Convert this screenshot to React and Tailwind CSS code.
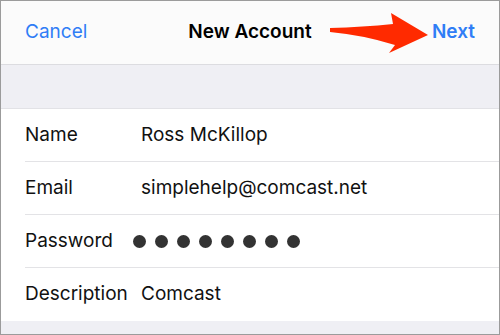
import React from 'react';

const rows = [
    { label: 'Name', value: 'Ross McKillop' },
    { label: 'Email', value: 'simplehelp@comcast.net' },
    { label: 'Password', dots: 8 },
    { label: 'Description', value: 'Comcast' },
];

const Arrow = () => (
    <svg className="absolute left-[326px] top-[8px]" width="106" height="50" viewBox="0 0 106 50">
        <path
            d="M3 19 Q36 18 66 15 L64 4 L101 26 L62 44 L68 36 Q36 26 3 23 Z"
            fill="#ff2a00"
        />
    </svg>
);

const App = () => {
    return (
        <div
            className="relative w-[500px] h-[335px] border border-[#9b9b9b] bg-[#efeff4] flex flex-col overflow-hidden"
            style={{ fontFamily: 'Inter, "Liberation Sans", sans-serif' }}
        >
            {/* header */}
            <div className="relative h-[64px] bg-[#fbfbfb] border-b border-[#dcdce0] flex items-center justify-between pl-[24px] pr-[24px] text-[19px]">
                <span className="text-[#2f7df6]">Cancel</span>
                <span className="absolute left-0 right-0 text-center font-semibold text-black pointer-events-none">New Account</span>
                <span className="text-[#2f7df6] font-semibold">Next</span>
                <Arrow />
            </div>

            <div className="h-[43px]" />

            {/* form */}
            <div className="bg-white border-t border-[#e2e2e6]">
                {rows.map((r, i) => (
                    <div key={r.label} className="pl-[24px]">
                        <div
                            className={
                                'h-[53px] flex items-center text-[19px] text-[#111] ' +
                                (i < rows.length - 1 ? 'border-b border-[#e3e3e6]' : '')
                            }
                        >
                            <span className="w-[116px] shrink-0">{r.label}</span>
                            {r.dots ? (
                                <div className="flex gap-[9px] -ml-[8px]">
                                    {Array.from({ length: r.dots }).map((_, d) => (
                                        <span key={d} className="w-[13px] h-[13px] rounded-full bg-[#333]" />
                                    ))}
                                </div>
                            ) : (
                                <span>{r.value}</span>
                            )}
                        </div>
                    </div>
                ))}
            </div>
        </div>
    );
};

export default App;
